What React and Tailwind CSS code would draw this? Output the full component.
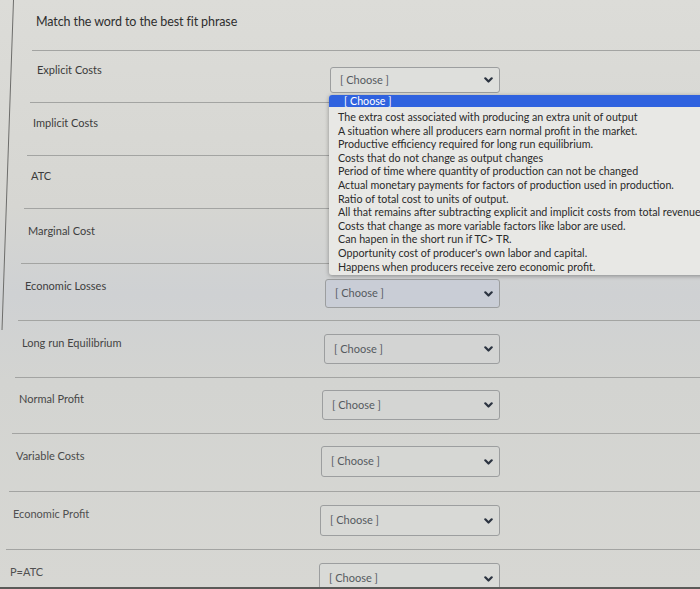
import React from "react";

const rows = [
  { label: "Explicit Costs", h: "h-[52px]", ml: "ml-[32px]", pl: "pl-[5px]", lw: "w-[298px]", lt: "pt-[12px]", st: "mt-[16px]", sh: "h-[26px]", sw: "w-[170px]", hidden: false, sel: "bg-[#dedfdc]", color: "text-[#3a3a3a]" },
  { label: "Implicit Costs", h: "h-[53px]", ml: "ml-[30px]", pl: "pl-[3px]", lw: "w-[297px]", lt: "pt-[13px]", hidden: true, color: "text-[#3c3c3c]" },
  { label: "ATC", h: "h-[53px]", ml: "ml-[27px]", pl: "pl-[4px]", lw: "w-[299px]", lt: "pt-[13px]", hidden: true, color: "text-[#3c3c3c]" },
  { label: "Marginal Cost", h: "h-[55px]", ml: "ml-[24px]", pl: "pl-[4px]", lw: "w-[298px]", lt: "pt-[15px]", hidden: true, color: "text-[#3e3e3e]" },
  { label: "Economic Losses", h: "h-[57px]", ml: "ml-[21px]", pl: "pl-[4px]", lw: "w-[304px]", lt: "pt-[15px]", st: "mt-[15px]", sh: "h-[29px]", sw: "w-[175px]", hidden: false, sel: "bg-[#c9cdd6]", color: "text-[#404040]" },
  { label: "Long run Equilibrium", h: "h-[57px]", ml: "ml-[18px]", pl: "pl-[4px]", lw: "w-[306px]", lt: "pt-[15px]", st: "mt-[13px]", sh: "h-[30px]", sw: "w-[176px]", hidden: false, sel: "bg-[#d3d4d3]", color: "text-[#444444]" },
  { label: "Normal Profit", h: "h-[56px]", ml: "ml-[15px]", pl: "pl-[4px]", lw: "w-[307px]", lt: "pt-[14px]", st: "mt-[12px]", sh: "h-[30px]", sw: "w-[178px]", hidden: false, sel: "bg-[#d4d5d3]", color: "text-[#474747]" },
  { label: "Variable Costs", h: "h-[58px]", ml: "ml-[12px]", pl: "pl-[4px]", lw: "w-[309px]", lt: "pt-[15px]", st: "mt-[12px]", sh: "h-[31px]", sw: "w-[179px]", hidden: false, sel: "bg-[#d6d7d4]", color: "text-[#4a4a4a]" },
  { label: "Economic Profit", h: "h-[58px]", ml: "ml-[9px]", pl: "pl-[4px]", lw: "w-[311px]", lt: "pt-[15px]", st: "mt-[13px]", sh: "h-[31px]", sw: "w-[180px]", hidden: false, sel: "bg-[#d8d9d6]", color: "text-[#505050]" },
  { label: "P=ATC", h: "h-[40px]", ml: "ml-[6px]", pl: "pl-[4px]", lw: "w-[313px]", lt: "pt-[15px]", st: "mt-[13px]", sh: "h-[31px]", sw: "w-[181px]", hidden: false, sel: "bg-[#d9dad7]", color: "text-[#505050]" },
];

const options = [
  "The extra cost associated with producing an extra unit of output",
  "A situation where all producers earn normal profit in the market.",
  "Productive efficiency required for long run equilibrium.",
  "Costs that do not change as output changes",
  "Period of time where quantity of production can not be changed",
  "Actual monetary payments for factors of production used in production.",
  "Ratio of total cost to units of output.",
  "All that remains after subtracting explicit and implicit costs from total revenue",
  "Costs that change as more variable factors like labor are used.",
  "Can hapen in the short run if TC> TR.",
  "Opportunity cost of producer's own labor and capital.",
  "Happens when producers receive zero economic profit.",
];

function Chevron() {
  return (
    <svg width="9" height="6" viewBox="0 0 9 6" className="shrink-0">
      <path d="M1.3 1.3 L4.5 4.5 L7.7 1.3" fill="none" stroke="#2b3340" strokeWidth="2.2" strokeLinecap="round" strokeLinejoin="round" />
    </svg>
  );
}

function Select({ r }) {
  return (
    <div className={`${r.st} ${r.sh} ${r.sw} ${r.sel} border border-[#9c9e9f] rounded-[3px] flex items-center justify-between pl-[9px] pr-[6px]`}>
      <span className="text-[11px] text-[#555a60]">[ Choose ]</span>
      <Chevron />
    </div>
  );
}

export default function App() {
  return (
    <div
      className="relative w-[700px] h-[589px] overflow-hidden bg-[linear-gradient(180deg,#dcdcd8_0%,#d6d6d2_35%,#cfd1d3_50%,#d3d4d1_65%,#d7d7d3_100%)] border-b-2 border-[#5a5a58]"
      style={{ fontFamily: "Lato, 'Open Sans', sans-serif" }}
    >
      <svg className="absolute left-0 top-0" width="20" height="340">
        <line x1="13.5" y1="0" x2="2" y2="330" stroke="#6d6d6b" strokeWidth="1" />
      </svg>

      <div className="pl-[36px] pt-[13px] h-[50px]">
        <div className="text-[12.5px] text-[#2e2e2e] tracking-[-0.1px]">Match the word to the best fit phrase</div>
      </div>

      {rows.map((r, i) => (
        <div key={i} className={`${r.h} ${r.ml} border-t border-[#a3a4a2] flex`}>
          <div className={`${r.pl} ${r.lw} ${r.lt} shrink-0 text-[11px] leading-[14px]`}>
            <span className={r.color}>{r.label}</span>
          </div>
          {!r.hidden && <Select r={r} />}
        </div>
      ))}

      <div className="absolute left-[329px] top-[95px] w-[390px] h-[180px] bg-[#e8e8e5] rounded-[3px] shadow-[0_1px_4px_rgba(0,0,0,0.35)] overflow-hidden">
        <div className="h-[12px] bg-[#2f62df] flex items-center pl-[15px]">
          <span className="text-[10.7px] text-white leading-none">[ Choose ]</span>
        </div>
        <div className="pl-[9px] pt-[3px]">
          {options.map((o, i) => (
            <div key={i} className="h-[13.6px] leading-[13.6px] text-[10.7px] text-[#2a2a2a] whitespace-nowrap">{o}</div>
          ))}
        </div>
      </div>
    </div>
  );
}
